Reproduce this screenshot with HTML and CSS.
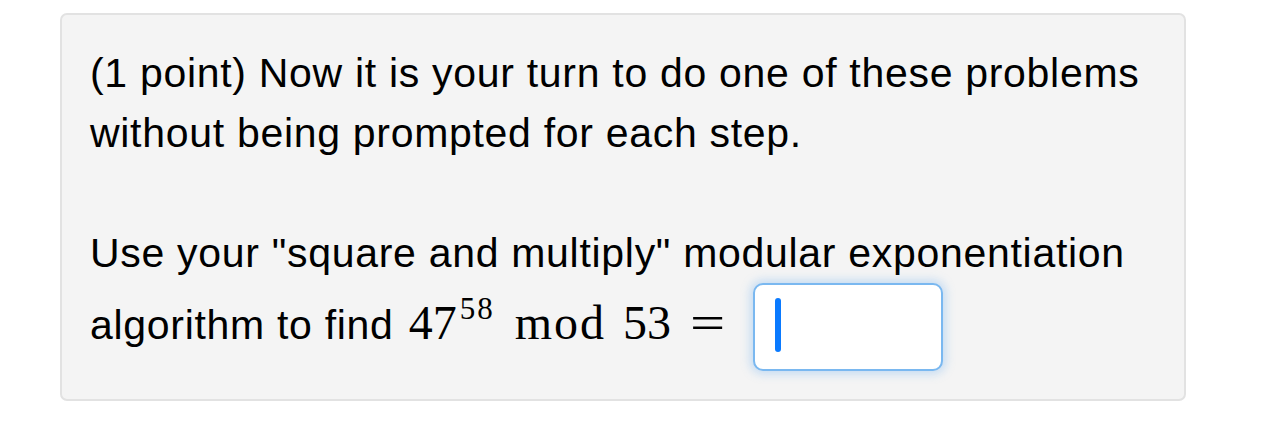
FILE: index.html
```html
<!DOCTYPE html>
<html>
<head>
<meta charset="utf-8">
<link rel="stylesheet" href="styles.css">
</head>
<body>
<div class="page">
  <div class="problem">
    <p class="line">(1 point) Now it is your turn to do one of these problems without being prompted for each step.</p>
    <p class="line gap">Use your "square and multiply" modular exponentiation algorithm to find <span class="math"><span class="num">47</span><span class="sup">58</span><span class="op">mod</span><span class="num n2">53</span><span class="eq">=</span></span><span class="answer"><span class="caret"></span></span></p>
  </div>
</div>
</body>
</html>
```
FILE: styles.css
```css
html, body {
  margin: 0;
  padding: 0;
  background: #ffffff;
}
.page {
  padding: 13px 0 0 60px;
}
.problem {
  width: 1126px;
  box-sizing: border-box;
  background: #f4f4f4;
  border: 2px solid #e2e2e2;
  border-radius: 7px;
  padding: 28px 36px 28px 28px;
  font-family: "Liberation Sans", Arial, sans-serif;
  font-size: 41px;
  letter-spacing: 0.7px;
  line-height: 60px;
  color: #000;
}
.line {
  margin: 0;
}
.gap {
  margin-top: 60px;
}
.math {
  font-family: "Liberation Serif", "DejaVu Serif", serif;
  font-size: 48px;
  letter-spacing: 0;
  line-height: 1;
  margin-left: 3px;
}
.num {
  display: inline-block;
  line-height: 0.8;
}
.sup {
  display: inline-block;
  font-size: 31px;
  line-height: 0.7;
  letter-spacing: 2px;
  vertical-align: 20px;
  margin-left: 3px;
}
.op {
  display: inline-block;
  line-height: 0.8;
  margin-left: 20px;
  letter-spacing: 2px;
}
.n2 {
  margin-left: 17px;
}
.eq {
  display: inline-block;
  line-height: 0.8;
  margin-left: 19px;
  transform: scaleX(1.3);
  transform-origin: left center;
}
.answer {
  display: inline-block;
  vertical-align: -32px;
  box-sizing: border-box;
  width: 190px;
  height: 88px;
  margin-left: 36px;
  background: #fff;
  border: 2.5px solid #7ab8f0;
  border-radius: 10px;
  box-shadow: 0 0 10px 3px rgba(110, 175, 240, 0.35);
  position: relative;
}
.caret {
  position: absolute;
  left: 20px;
  top: 13px;
  width: 6px;
  height: 54px;
  border-radius: 3px;
  background: #0a7aff;
}
```
